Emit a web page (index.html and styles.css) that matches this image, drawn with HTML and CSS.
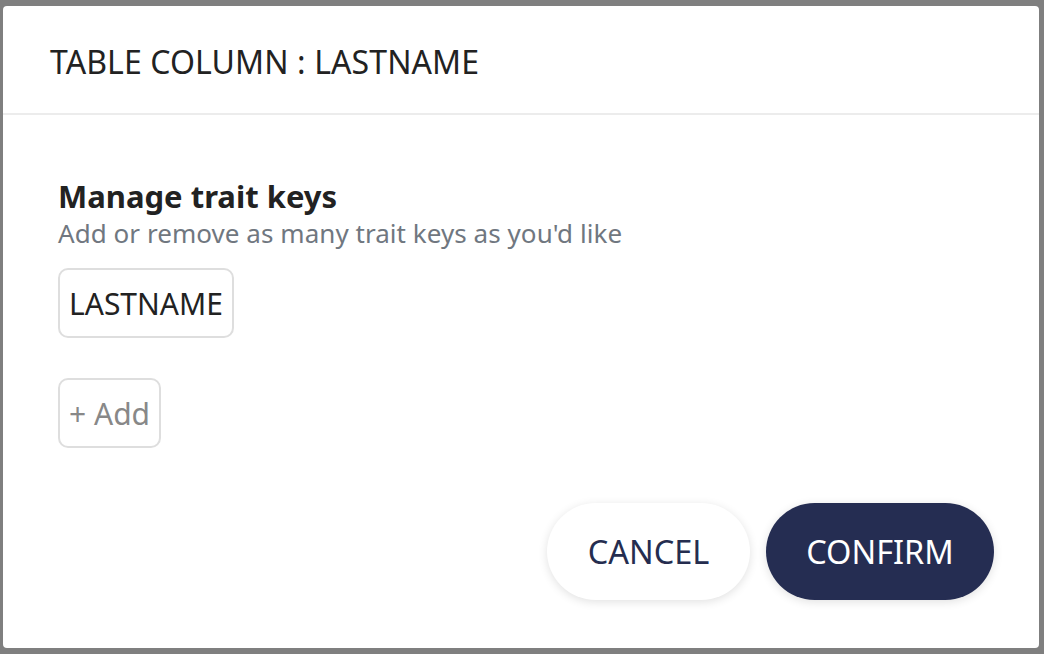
FILE: index.html
```html
<!DOCTYPE html>
<html>
<head>
<meta charset="utf-8">
<link rel="stylesheet" href="styles.css">
</head>
<body>
<div class="modal">
  <div class="modal-header">
    <h2 class="modal-title">TABLE COLUMN : LASTNAME</h2>
  </div>
  <div class="modal-body">
    <h3 class="section-title">Manage trait keys</h3>
    <p class="section-sub">Add or remove as many trait keys as you'd like</p>
    <div class="chips">
      <div class="chip">LASTNAME</div>
      <div class="chip chip-add">+ Add</div>
    </div>
    <div class="actions">
      <button class="btn btn-cancel">CANCEL</button>
      <button class="btn btn-confirm">CONFIRM</button>
    </div>
  </div>
</div>
</body>
</html>
```
FILE: styles.css
```css
* { box-sizing: border-box; }
html, body { margin: 0; padding: 0; }
body {
  width: 1044px;
  height: 654px;
  background: #7f7f7f;
  font-family: "Noto Sans", "Open Sans", sans-serif;
  padding: 6px 5px 6px 3px;
  overflow: hidden;
}
.modal {
  background: #fff;
  height: 642px;
  border-radius: 4px;
  display: flex;
  flex-direction: column;
}
.modal-header {
  height: 109px;
  border-bottom: 2px solid #ececec;
  display: flex;
  align-items: center;
  padding-left: 47px;
  padding-top: 3px;
}
.modal-title {
  margin: 0;
  font-size: 32px;
  font-weight: 400;
  color: #222;
  letter-spacing: 0.1px;
}
.modal-body {
  flex: 1;
  padding: 60px 45px 48px 55px;
  display: flex;
  flex-direction: column;
}
.section-title {
  margin: 0;
  font-size: 31px;
  font-weight: 700;
  color: #222;
  line-height: 42px;
}
.section-sub {
  margin: 0;
  font-size: 26px;
  letter-spacing: 0.05px;
  color: #707780;
  line-height: 32px;
}
.chips {
  margin-top: 19px;
  display: flex;
  flex-direction: column;
  align-items: flex-start;
  gap: 40px;
}
.chip {
  height: 70px;
  border: 2px solid #dedede;
  border-radius: 10px;
  padding: 0 9px;
  display: flex;
  align-items: center;
  font-size: 30px;
  color: #222;
}
.chip-add { color: #888; }
.actions {
  margin-top: auto;
  display: flex;
  justify-content: flex-end;
  gap: 16px;
}
.btn {
  height: 97px;
  border: none;
  border-radius: 49px;
  font-family: "Noto Sans", "Open Sans", sans-serif;
  font-size: 32.5px;
  padding: 0;
}
.btn-cancel {
  width: 203px;
  background: #fff;
  color: #252d4f;
  box-shadow: 0 2px 10px rgba(0,0,0,0.12);
}
.btn-confirm {
  width: 228px;
  background: #252d52;
  color: #fff;
  box-shadow: 0 2px 10px rgba(0,0,0,0.12);
}
```
